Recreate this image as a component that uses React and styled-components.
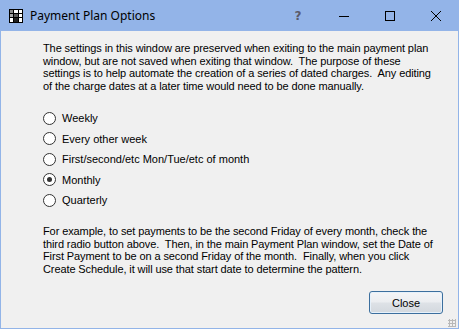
import styled, { createGlobalStyle } from "styled-components";

const GlobalStyle = createGlobalStyle`
  html, body {
    margin: 0;
    padding: 0;
    background: #f0f0f0;
  }
`;

const Window = styled.div`
  width: 459px;
  height: 329px;
  box-sizing: border-box;
  border: 1px solid #92b4e8;
  border-top: none;
  background: #f0f0f0;
  display: flex;
  flex-direction: column;
  font-family: "Liberation Sans", Arial, sans-serif;
  color: #000;
`;

const TitleBar = styled.div`
  height: 31px;
  margin: 0 -1px;
  background: #93b4e8;
  display: flex;
  align-items: center;
  flex-shrink: 0;
`;

const AppIcon = styled.div`
  width: 12px;
  height: 12px;
  margin: 0 7px 0 9px;
  display: grid;
  grid-template-columns: repeat(3, 1fr);
  gap: 1px;
  background: #000;
  border: 1px solid #000;
`;

const Cell = styled.span`
  background: ${(p) => p.$c};
`;

const Title = styled.div`
  font-family: "Noto Sans", "Open Sans", sans-serif;
  font-size: 12px;
  color: #000;
  flex: 1;
  padding-bottom: 1px;
`;

const Controls = styled.div`
  display: flex;
  align-items: center;
  height: 100%;
`;

const CtrlButton = styled.div`
  width: ${(p) => p.$w || 46}px;
  height: 100%;
  display: flex;
  align-items: center;
  justify-content: center;
`;

const HelpMark = styled.span`
  font-family: "DejaVu Sans", sans-serif;
  font-weight: bold;
  font-size: 12px;
  color: #5a5a6a;
`;

const Body = styled.div`
  flex: 1;
  display: flex;
  flex-direction: column;
  padding: 11px 14px 14px 42px;
`;

const Paragraph = styled.p`
  margin: 0;
  font-size: 11px;
  line-height: 12.7px;
  letter-spacing: -0.1px;
`;

const RadioList = styled.div`
  display: flex;
  flex-direction: column;
  gap: 7.5px;
  margin: 19px 0 18px 0;
`;

const RadioRow = styled.label`
  display: flex;
  align-items: center;
  gap: 6px;
  font-size: 11px;
  height: 13px;
`;

const RadioCircle = styled.span`
  width: 11px;
  height: 11px;
  border-radius: 50%;
  border: 1px solid #333;
  background: #fff;
  display: flex;
  align-items: center;
  justify-content: center;
  flex-shrink: 0;

  &::after {
    content: "";
    width: 5px;
    height: 5px;
    border-radius: 50%;
    background: ${(p) => (p.$checked ? "#333" : "transparent")};
  }
`;

const Footer = styled.div`
  margin-top: auto;
  display: flex;
  justify-content: flex-end;
  position: relative;
`;

const CloseButton = styled.button`
  width: 74px;
  height: 23px;
  box-sizing: border-box;
  border: 1px solid #3c6f9e;
  border-radius: 3px;
  background: linear-gradient(#f4f5f7 0%, #eceef1 45%, #dde1e6 55%, #d3d8de 100%);
  font-family: "Liberation Sans", Arial, sans-serif;
  font-size: 11px;
  color: #000;
  padding: 0;
  margin-right: 1px;
  box-shadow: inset 0 0 0 1px #e6f1fb;
`;

const Grip = styled.div`
  position: absolute;
  right: -12px;
  bottom: -13px;
  width: 8px;
  height: 8px;
  background-image: radial-gradient(#b8b8b8 1px, transparent 1.2px);
  background-size: 3px 3px;
`;

const options = [
  "Weekly",
  "Every other week",
  "First/second/etc Mon/Tue/etc of month",
  "Monthly",
  "Quarterly",
];

const iconCells = [
  "#8a8a8a", "#fff", "#fff",
  "#a8a8a8", "#5a5a5a", "#fff",
  "#fff", "#202020", "#fff",
];

export default function App() {
  return (
    <>
      <GlobalStyle />
      <Window>
        <TitleBar>
          <AppIcon>
            {iconCells.map((c, i) => (
              <Cell key={i} $c={c} />
            ))}
          </AppIcon>
          <Title>Payment Plan Options</Title>
          <Controls>
            <CtrlButton>
              <HelpMark>?</HelpMark>
            </CtrlButton>
            <CtrlButton>
              <svg width="10" height="10" viewBox="0 0 10 10">
                <path d="M0 5.5h10" stroke="#000" strokeWidth="1" />
              </svg>
            </CtrlButton>
            <CtrlButton>
              <svg width="10" height="10" viewBox="0 0 10 10">
                <rect x="0.5" y="0.5" width="9" height="9" fill="none" stroke="#000" />
              </svg>
            </CtrlButton>
            <CtrlButton>
              <svg width="10" height="10" viewBox="0 0 10 10">
                <path d="M0 0L10 10M10 0L0 10" stroke="#000" strokeWidth="1" />
              </svg>
            </CtrlButton>
          </Controls>
        </TitleBar>
        <Body>
          <Paragraph>
            The settings in this window are preserved when exiting to the main payment plan
            <br />
            window, but are not saved when exiting that window.&nbsp; The purpose of these
            <br />
            settings is to help automate the creation of a series of dated charges.&nbsp; Any editing
            <br />
            of the charge dates at a later time would need to be done manually.
          </Paragraph>
          <RadioList>
            {options.map((o) => (
              <RadioRow key={o}>
                <RadioCircle $checked={o === "Monthly"} />
                {o}
              </RadioRow>
            ))}
          </RadioList>
          <Paragraph>
            For example, to set payments to be the second Friday of every month, check the
            <br />
            third radio button above.&nbsp; Then, in the main Payment Plan window, set the Date of
            <br />
            First Payment to be on a second Friday of the month.&nbsp; Finally, when you click
            <br />
            Create Schedule, it will use that start date to determine the pattern.
          </Paragraph>
          <Footer>
            <CloseButton>Close</CloseButton>
            <Grip />
          </Footer>
        </Body>
      </Window>
    </>
  );
}
